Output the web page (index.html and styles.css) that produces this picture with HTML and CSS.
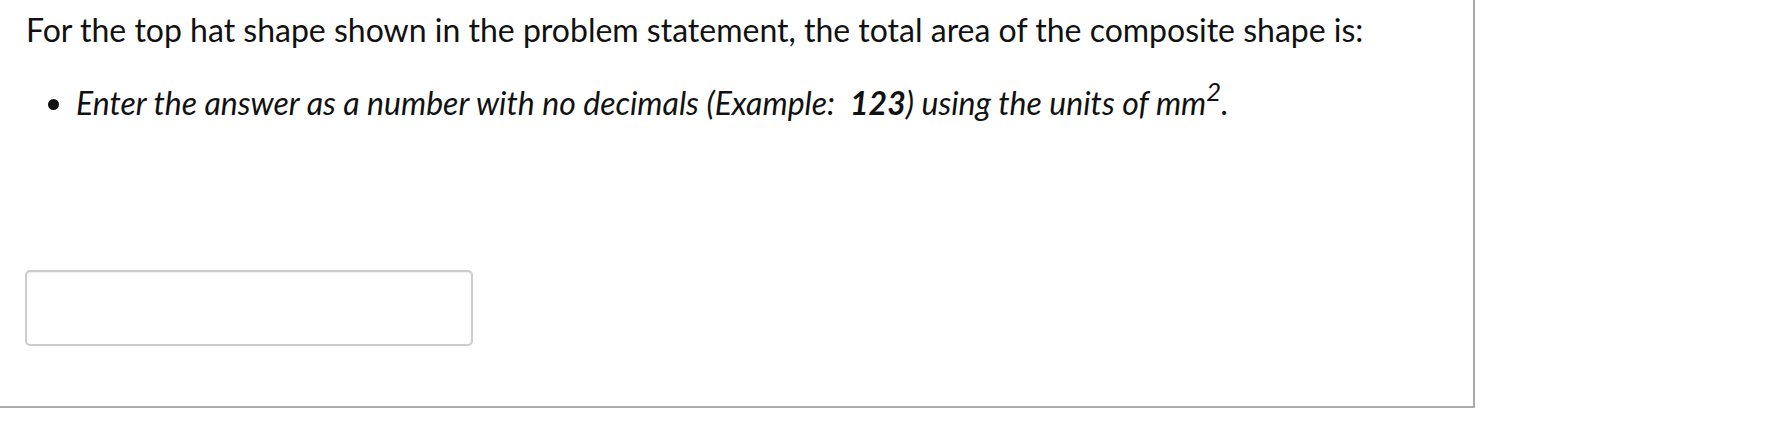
FILE: index.html
```html
<!DOCTYPE html>
<html lang="en">
<head>
    <meta charset="UTF-8">
    <title>Question</title>
    <link rel="stylesheet" href="styles.css">
</head>
<body>
<div class="question">
    <div class="question-text">
        <p>For the top hat shape shown in the problem statement, the total area of the composite shape is:</p>
        <ul>
            <li><em>Enter the answer as a number with no decimals (Example:&nbsp; <strong>123</strong>) using the units of mm<sup>2</sup>.</em></li>
        </ul>
    </div>
    <div class="answer">
        <input type="text" class="answer-input" aria-label="Answer">
    </div>
</div>
</body>
</html>
```

FILE: styles.css
```css
/* Question card */
body, html {
    margin: 0;
    padding: 0;
    font-family: Lato, "Liberation Sans", Arial, sans-serif;
    background-color: #fff;
    color: #2d3b45;
}
* { box-sizing: border-box; }
.question {
    width: 1475px;
    border-right: 2px solid #aaa;
    border-bottom: 2px solid #aaa;
    padding: 6px 0 60px 25px;
}
.question-text {
    font-size: 32px;
    line-height: 1.5;
    color: #111;
}
.question-text p {
    margin: 0 0 0 1px;
}
.question-text ul {
    margin: 25px 0 0;
    padding-left: 51px;
}
.question-text sup {
    font-size: 0.8em;
    line-height: 0;
    vertical-align: 0.55em;
}
.answer {
    margin-top: 143px;
}
.answer-input {
    display: block;
    width: 448px;
    height: 76px;
    border: 2px solid #ccc;
    border-radius: 5px;
    box-shadow: inset 0 1px 2px rgba(0,0,0,0.08);
    font-size: 24px;
    font-family: inherit;
    padding: 0 12px;
}
```
